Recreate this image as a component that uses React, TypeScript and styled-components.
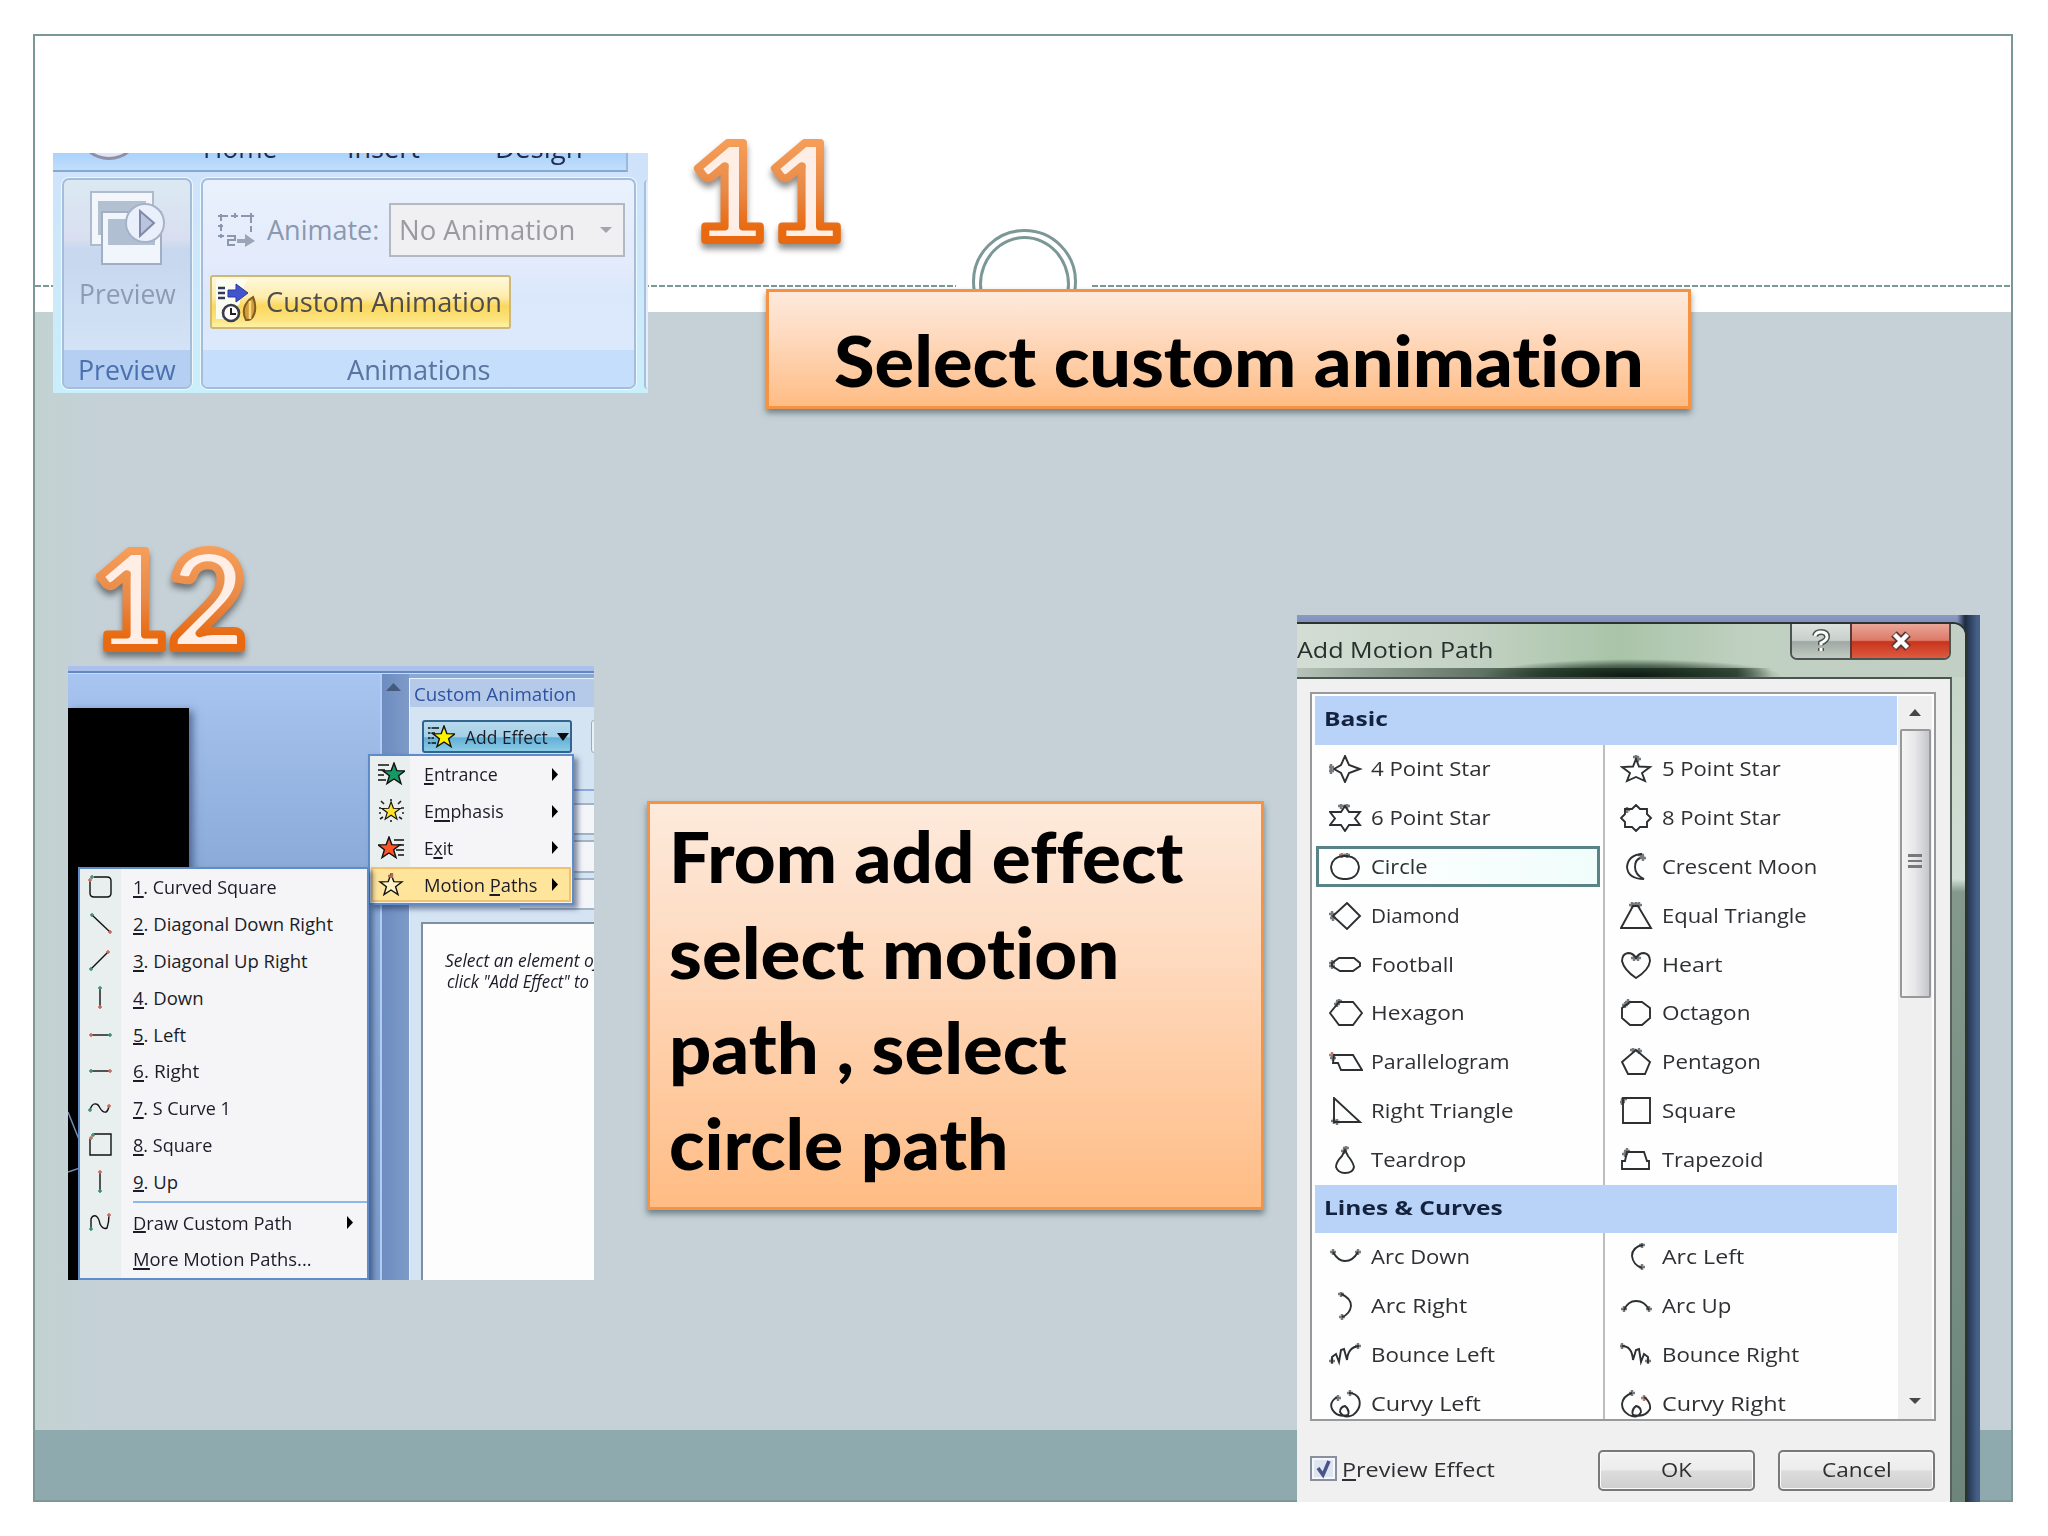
import React, { useLayoutEffect, useRef, useState } from "react";
import styled, { createGlobalStyle, css } from "styled-components";

const Global = createGlobalStyle`
  * { box-sizing: border-box; }
  body { margin: 0; background: #fff; }
  svg { flex: none; }
`;

const ui = `"Open Sans", "Noto Sans", sans-serif`;
const heading = `Lato, "Open Sans", sans-serif`;

/* ---------- text fitted to a given width ---------- */

const FitOuter = styled.span`
  display: inline-block;
  flex: none;
  white-space: nowrap;
`;
const FitInner = styled.span`
  display: inline-block;
  transform-origin: 0 50%;
  white-space: pre;
  u {
    text-decoration: none;
    box-shadow: inset 0 -2px 0 currentColor;
    display: inline-block;
    line-height: 1.12;
  }
`;

function Fit({ w, children }: { w: number; children: React.ReactNode }) {
  const ref = useRef<HTMLSpanElement>(null);
  const [k, setK] = useState(1);
  useLayoutEffect(() => {
    if (ref.current && ref.current.offsetWidth) setK(w / ref.current.offsetWidth);
  }, [w]);
  return (
    <FitOuter style={{ width: w }}>
      <FitInner ref={ref} style={{ transform: `scaleX(${k})` }}>
        {children}
      </FitInner>
    </FitOuter>
  );
}

/* ---------- slide ---------- */

const Page = styled.main`
  position: relative;
  width: 2048px;
  height: 1536px;
  overflow: hidden;
  padding: 34px 35px 34px 33px;
  background: #fff;
  font-family: ${ui};
`;
const Frame = styled.div`
  display: flex;
  flex-direction: column;
  height: 1468px;
  border: 2px solid #7b9796;
`;
const FrameTop = styled.div`
  height: 276px;
  padding-top: 249px;
`;
const FrameBody = styled.div`
  flex: 1;
  background: linear-gradient(90deg, #c2d2d1 0, #c5d1d7 60px);
`;
const FrameFoot = styled.div`
  height: 70px;
  background: #8eaaae;
`;
const DashRow = styled.div`
  display: flex;
  justify-content: space-between;
`;
const Dash = styled.div<{ $w: number }>`
  width: ${(p) => p.$w}px;
  height: 2px;
  background: repeating-linear-gradient(90deg, #7b9796 0 6px, transparent 6px 8px);
`;
const Place = styled.div<{ $x: number; $y: number; $w: number; $h: number }>`
  position: absolute;
  left: ${(p) => p.$x}px;
  top: ${(p) => p.$y}px;
  width: ${(p) => p.$w}px;
  height: ${(p) => p.$h}px;
`;
const Ring = styled(Place)`
  border: 3.5px solid #7b9796;
  border-radius: 50%;
  padding: 4px;
  background: #fff;
  &::before {
    content: "";
    display: block;
    height: 100%;
    border: 3.5px solid #7b9796;
    border-radius: 50%;
  }
`;
const Callout = styled(Place)<{ $pad: string }>`
  border: 3px solid #f59344;
  background: linear-gradient(#fdeadc 0%, #fed9bd 40%, #ffbc84 100%);
  box-shadow: 0 4px 6px rgba(30, 50, 60, 0.5);
  padding: ${(p) => p.$pad};
  font-family: ${heading};
  font-weight: 900;
  font-size: 71px;
  line-height: 95.6px;
  font-variant-ligatures: none;
  color: #000;
`;
const Line = styled.div`
  display: flex;
  height: 95.6px;
`;

function WordArt({ x, y, text, id }: { x: number; y: number; text: string; id: string }) {
  return (
    <Place $x={x} $y={y} $w={170} $h={130}>
      <svg width="170" height="130" style={{ filter: "drop-shadow(0 5px 3px rgba(0,0,0,.45))" }}>
        <defs>
          <linearGradient id={id} x1="0" y1="0" x2="0" y2="118" gradientUnits="userSpaceOnUse">
            <stop offset="0" stopColor="#f9a25c" />
            <stop offset="0.5" stopColor="#e88a48" />
            <stop offset="0.85" stopColor="#e8690f" />
          </linearGradient>
        </defs>
        <text
          x="0 77"
          y="110"
          fontFamily="Lato"
          fontWeight="900"
          fontSize="134"
          fill="#feeee6"
          stroke={`url(#${id})`}
          strokeWidth="8"
          strokeLinejoin="round"
        >
          {text}
        </text>
      </svg>
    </Place>
  );
}

/* ---------- ribbon clipping ---------- */

const Ribbon = styled(Place)`
  overflow: hidden;
  display: flex;
  flex-direction: column;
  background: linear-gradient(#cfe2fb, #c9effa);
  font-size: 27px;
  line-height: 36px;
`;
const TabStrip = styled.div`
  height: 19px;
  width: 575px;
  border-bottom: 2px solid #86a9cf;
  border-right: 2px solid #9db7d8;
  background: linear-gradient(#a9d2fb, #c2defc);
  overflow: hidden;
  display: flex;
  padding-left: 27px;
`;
const Orb = styled.div`
  width: 58px;
  height: 50px;
  margin-top: -43px;
  border-radius: 50%;
  border: 3px solid #8e8fa6;
  background: #dfe3f2;
`;
const TabText = styled.div<{ $gap: number }>`
  margin-left: ${(p) => p.$gap}px;
  margin-top: -23px;
  color: #1e2b4c;
`;
const Groups = styled.div`
  flex: 1;
  display: flex;
  padding: 6px 0 4px 9px;
  gap: 9px;
`;
const Group = styled.section<{ $w: number; $dim?: boolean }>`
  width: ${(p) => p.$w}px;
  flex: none;
  display: flex;
  flex-direction: column;
  border: 2px solid #a6bdd9;
  border-radius: 7px;
  overflow: hidden;
  box-shadow: 0 0 0 1px #eef9ff;
  background: ${(p) =>
    p.$dim
      ? "linear-gradient(#dbe9f2 0%, #d9dff0 28%, #c6d7ee 34%, #d8e6f8 100%)"
      : "linear-gradient(#e9f1fc 0%, #e3ebfc 40%, #dbe8fb 55%, #dde8fb 100%)"};
`;
const GroupFoot = styled.footer<{ $dim?: boolean }>`
  height: 37px;
  display: flex;
  justify-content: center;
  padding-top: 2px;
  background: ${(p) => (p.$dim ? "#b4cff1" : "#c5defc")};
  color: ${(p) => (p.$dim ? "#4a70b0" : "#58749f")};
`;
const PreviewBody = styled.div`
  flex: 1;
  display: flex;
  flex-direction: column;
  align-items: center;
  padding-top: 10px;
  gap: 10px;
  color: #8e9bb0;
`;
const AnimBody = styled.div`
  flex: 1;
  display: flex;
  flex-direction: column;
  align-items: flex-start;
  padding: 23px 0 0 7px;
  gap: 18px;
`;
const AnimRow = styled.div`
  display: flex;
  align-items: center;
  height: 54px;
  padding-left: 7px;
  color: #8b98ad;
`;
const Combo = styled.div`
  margin-left: 10px;
  width: 236px;
  height: 54px;
  border: 2px solid #b3b8c2;
  background: #f0f0f3;
  color: #9a9ba0;
  display: flex;
  align-items: center;
  padding: 0 10px 0 8px;
  justify-content: space-between;
`;
const CustomBtn = styled.div`
  width: 301px;
  height: 54px;
  border: 2px solid #cdb877;
  border-radius: 3px;
  background: linear-gradient(#fff9dc 0%, #fdecab 40%, #fbd75c 58%, #fce37d 85%, #fff2a8 100%);
  display: flex;
  align-items: center;
  padding-left: 4px;
  gap: 8px;
  color: #4d4c4e;
`;
const Gap = styled.span<{ $w: number }>`
  width: ${(p) => p.$w}px;
  flex: none;
`;
const NextGroup = styled.div`
  width: 6px;
  margin: 2px 0 0 -1px;
  border-left: 2px solid #a9bedb;
  border-radius: 6px 0 0 6px;
  background: #e3edfb;
`;

function RibbonShot() {
  return (
    <Ribbon $x={53} $y={153} $w={595} $h={240}>
      <TabStrip>
        <Orb />
        <TabText $gap={65}><Fit w={74}>Home</Fit></TabText>
        <TabText $gap={70}><Fit w={73}>Insert</Fit></TabText>
        <TabText $gap={75}><Fit w={88}>Design</Fit></TabText>
      </TabStrip>
      <Groups>
        <Group $w={130} $dim>
          <PreviewBody>
            <svg width="76" height="76" viewBox="0 0 76 76">
              <rect x="2" y="2" width="62" height="53" fill="#f3f7fb" stroke="#aebbcf" strokeWidth="2" />
              <rect x="9" y="11" width="48" height="34" fill="#b3c0d1" />
              <rect x="13" y="22" width="59" height="52" fill="#f1f6fc" stroke="#a2aec2" strokeWidth="2" />
              <rect x="19" y="29" width="47" height="26" fill="#b1bfd3" />
              <circle cx="56" cy="33" r="19" fill="#eaf0fb" stroke="#a7b2c8" strokeWidth="2" />
              <path d="M51 21 L65 33 L51 46Z" fill="#bcc3dc" stroke="#7f8aa8" strokeWidth="2" />
            </svg>
            <Fit w={97}>Preview</Fit>
          </PreviewBody>
          <GroupFoot $dim><Fit w={98}>Preview</Fit></GroupFoot>
        </Group>
        <Group $w={435}>
          <AnimBody>
            <AnimRow>
              <svg width="40" height="36" viewBox="0 0 40 36" fill="none" stroke="#8a97ad" strokeWidth="2">
                <path d="M4 2V26M4 4H34V20" strokeDasharray="7 3" />
                <path d="M1 4H7M1 24H7M31 4H37M34 1V7M18 1V6M1 14H6" />
                <path d="M10 24H18V28H11V33H18" />
                <path d="M20 27H28V22L38 29L28 35V31H20Z" fill="#9aa5b8" stroke="none" />
              </svg>
              <Gap $w={10} />
              <Fit w={112}>Animate:</Fit>
              <Combo>
                <Fit w={176}>No Animation</Fit>
                <svg width="14" height="8" viewBox="0 0 14 8"><path d="M1 1H13L7 7Z" fill="#a2a5ae" /></svg>
              </Combo>
            </AnimRow>
            <CustomBtn>
              <svg width="42" height="46" viewBox="0 0 42 46">
                <path d="M0 0H32L24 14V24L12 40H0Z" fill="#fbfdf0" />
                <path d="M2 9H9M2 14H9M2 19H9" stroke="#33375e" strokeWidth="2.6" />
                <path d="M12 11H20V5L32 14L20 23V18H12Z" fill="#4255cf" stroke="#2b3899" />
                <circle cx="15" cy="34" r="8" fill="#fff" stroke="#3a3d4a" strokeWidth="2.6" />
                <path d="M15 29V35H20" stroke="#222" strokeWidth="2" fill="none" />
                <path d="M37 18C27 24 26 34 30 41C38 42 42 30 37 18Z" fill="#d69b34" stroke="#7e5a25" strokeWidth="2" />
                <path d="M34 22V40" stroke="#f6da84" strokeWidth="2.5" />
              </svg>
              <Fit w={236}>Custom Animation</Fit>
            </CustomBtn>
          </AnimBody>
          <GroupFoot><Fit w={144}>Animations</Fit></GroupFoot>
        </Group>
        <NextGroup />
      </Groups>
    </Ribbon>
  );
}

/* ---------- menu clipping ---------- */

const Shot = styled(Place)`
  overflow: hidden;
  display: flex;
  flex-direction: column;
  background: #8ba9d8;
  font-size: 18.5px;
  line-height: 24px;
  color: #1b1c28;
`;
const TopStrip = styled.div`
  height: 8px;
  background: #a9c1ec;
  border-bottom: 2px solid #6487bf;
`;
const Workspace = styled.div`
  flex: 1;
  display: flex;
  border-top: 1px solid #c8dcf8;
`;
const Canvas = styled.div`
  width: 314px;
  flex: none;
  padding-top: 34px;
  background: linear-gradient(#a8c4f0 0, #8cabd8 190px, #7c9ccb 100%);
  border-right: 2px solid #b1cdf6;
`;
const BlackSlide = styled.div`
  width: 121px;
  height: 572px;
  background: #000;
  box-shadow: 4px 3px 8px rgba(20, 40, 90, 0.55);
`;
const ScrollCol = styled.div`
  width: 27px;
  flex: none;
  display: flex;
  justify-content: flex-start;
  align-items: flex-start;
  padding: 9px 0 0 4px;
  background: linear-gradient(90deg, #6d8cc0, #7d9ac8);
`;
const Pane = styled.div`
  width: 190px;
  flex: none;
  margin-top: 4px;
  display: flex;
  flex-direction: column;
  background: #d5e4f2;
  border-left: 1px solid #e5f2fc;
  border-top: 1px solid #e5f2fc;
`;
const PaneTitle = styled.div`
  height: 28px;
  padding: 3px 0 0 4px;
  background: #b5cae8;
  color: #2d52a0;
`;
const ButtonsRow = styled.div`
  display: flex;
  gap: 19px;
  padding: 13px 0 0 12px;
`;
const AddBtn = styled.div`
  width: 150px;
  height: 33px;
  flex: none;
  border: 2px solid #31648f;
  border-radius: 3px;
  background: linear-gradient(#b7d9ec 0%, #a4cfe6 50%, #62b0d6 55%, #8ccbe6 100%);
  display: flex;
  align-items: center;
  padding-left: 4px;
`;
const NextBtn = styled.div`
  width: 20px;
  height: 33px;
  border: 1px solid #9aabc0;
  border-radius: 3px;
  background: #e9f0f7;
`;
const Fields = styled.div`
  margin-top: 36px;
  height: 121px;
  border-top: 2px solid #8aaade;
  padding: 12px 0 0 0;
  display: flex;
  flex-direction: column;
  gap: 5px;
`;
const Field = styled.div`
  height: 33px;
  margin-left: 110px;
  border: 2px solid #a3b3c6;
  border-width: 2px 0;
  background: #f3f5f9;
`;
const EffectList = styled.div`
  flex: 1;
  margin: 12px 0 0 11px;
  padding: 26px 0 0 22px;
  border: 2px solid #7d8ea5;
  border-width: 2px 0 0 2px;
  background: #fdfdfe;
  font-size: 17.5px;
  line-height: 20.5px;
  font-style: italic;
  div + div { padding-left: 2px; }
`;
const Menu = styled(Place)<{ $col: number }>`
  border: 2px solid #5f8cc9;
  background: linear-gradient(90deg, #e9eeee ${(p) => p.$col}px, #f5f5f7 ${(p) => p.$col}px);
  display: flex;
  flex-direction: column;
  box-shadow: 4px 4px 5px rgba(20, 40, 80, 0.5);
`;
const Item = styled.div<{ $hot?: boolean }>`
  height: 36.8px;
  display: flex;
  align-items: center;
  padding-left: 8px;
  padding-right: 14px;
  ${(p) =>
    p.$hot &&
    css`
      margin: 1px 1px 0 1px;
      height: 35px;
      padding-left: 5px;
      padding-right: 11px;
      border: 2px solid #f3c36c;
      background: #ffe59c;
    `}
`;
const Spacer = styled.span`
  flex: 1;
`;
const Rule = styled.div`
  height: 2px;
  margin: 1px 0 1px 53px;
  background: #8db8ee;
`;
const Arrow = () => (
  <svg width="6" height="13" viewBox="0 0 6 13"><path d="M0 0L6 6.500L0 13Z" fill="#000" /></svg>
);
const starD = "M12 1L14.8 8.6L23 8.9L16.6 13.8L19 21.6L12 17L5 21.6L7.4 13.8L1 8.9L9.2 8.6Z";

function StarIcon({ kind }: { kind: "add" | "in" | "em" | "out" | "path" }) {
  const fill = { add: "#fff200", in: "#159a66", em: "#ffe22e", out: "#fb5426", path: "#fff3c4" }[kind];
  const shift = kind === "add" || kind === "in" ? 4 : kind === "out" ? -1 : 1;
  return (
    <svg width="27" height="24" viewBox="0 0 27 24">
      {(kind === "add" || kind === "in") && (
        <path d="M0 3H11M0 8H7M0 13H6M0 18H8" stroke="#111" strokeWidth="1.6" strokeDasharray={kind === "in" ? undefined : "2.5 1 9 0"} />
      )}
      {kind === "out" && <path d="M16 4H26M20 9H26M18 14H26M20 19H26" stroke="#111" strokeWidth="1.6" />}
      {kind === "em" && (
        <path d="M3 2L6 5M23 2L20 5M1 9H3M23 9H26M2 20L5 18M24 20L21 18M13 0V2M1 14H3M24 14H26M13 21V23" stroke="#222" strokeWidth="1.6" />
      )}
      <path d={starD} transform={`translate(${shift} 0)${kind === "em" ? " translate(2 2) scale(.84)" : ""}`} fill={fill} stroke="#111" strokeWidth="1.4" />
      {kind === "path" && <path d="M10 3H14M14 0V5" stroke="#b06a50" strokeWidth="2.4" />}
    </svg>
  );
}

const G = "#3d8f78";
const R = "#c96a5a";
type Mark = [number, number, string];
const menuPaths: Record<string, { d: string; m: Mark[] }> = {
  csq: { d: "M6 3H19Q23 3 23 7V19Q23 23 19 23H6Q2 23 2 19V7", m: [[4, 3, G], [2, 6, R]] },
  ddr: { d: "M4 4L22 21", m: [[4, 4, G], [22, 21, R]] },
  dur: { d: "M3 21L20 4", m: [[3, 21, G], [20, 4, R]] },
  down: { d: "M12 3V23", m: [[12, 3, G], [12, 22, R]] },
  left: { d: "M3 13H22", m: [[3, 13, R], [22, 13, G]] },
  right: { d: "M3 13H22", m: [[3, 13, G], [22, 13, R]] },
  scv: { d: "M2 15Q4 8 8 9Q10 9 12 13Q15 18 18 17Q20 16 21 11", m: [[2, 15, G], [21, 11, R]] },
  sq: { d: "M6 2H23V23H2V7", m: [[5, 3, G], [3, 6, R]] },
  up: { d: "M12 3V23", m: [[12, 3, R], [12, 22, G]] },
  draw: { d: "M3 19V9Q4 5 8 6Q11 8 12 14Q15 20 19 18Q21 12 21 5", m: [[3, 19, G], [21, 5, R]] },
};
function MenuIcon({ n }: { n: string }) {
  const p = menuPaths[n];
  return (
    <svg width="25" height="26" viewBox="0 0 25 26">
      {p && <path d={p.d} fill="none" stroke="#111" strokeWidth="1.4" />}
      {p && p.m.map(([x, y, c], i) => <path key={i} d={`M${x - 2} ${y}H${x + 2}M${x} ${y - 2}V${y + 2}`} stroke={c} strokeWidth="1.5" />)}
    </svg>
  );
}

const pathItems: [string, string, string, number][] = [
  ["csq", "1", ". Curved Square", 144],
  ["ddr", "2", ". Diagonal Down Right", 200],
  ["dur", "3", ". Diagonal Up Right", 175],
  ["down", "4", ". Down", 70],
  ["left", "5", ". Left", 53],
  ["right", "6", ". Right", 66],
  ["scv", "7", ". S Curve 1", 98],
  ["sq", "8", ". Square", 79],
  ["up", "9", ". Up", 45],
];

function MenuShot() {
  return (
    <Shot $x={68} $y={666} $w={526} $h={614}>
      <TopStrip />
      <Workspace>
        <Canvas>
          <BlackSlide>
            <svg width="12" height="572">
              <path d="M0 404L12 434M0 464L12 460" stroke="#6f8fb4" strokeWidth="1.5" fill="none" />
            </svg>
          </BlackSlide>
        </Canvas>
        <ScrollCol>
          <svg width="15" height="8" viewBox="0 0 15 8"><path d="M0 8L7.500 0L15 8Z" fill="#465a7e" /></svg>
        </ScrollCol>
        <Pane>
          <PaneTitle><Fit w={162}>Custom Animation</Fit></PaneTitle>
          <ButtonsRow>
            <AddBtn>
              <StarIcon kind="add" />
              <Gap $w={10} />
              <Fit w={83}>Add Effect</Fit>
              <Gap $w={9} />
              <svg width="12" height="8" viewBox="0 0 12 8"><path d="M0 0H12L6 8Z" fill="#0b0b14" /></svg>
            </AddBtn>
            <NextBtn />
          </ButtonsRow>
          <Fields>
            <Field />
            <Field />
            <Field />
          </Fields>
          <EffectList>
            <div><Fit w={223}>Select an element of the slide</Fit></div>
            <div><Fit w={203}>click "Add Effect" to add ani</Fit></div>
          </EffectList>
        </Pane>
      </Workspace>
      <Menu $x={300} $y={88} $w={206} $h={151} $col={40}>
        <Item><StarIcon kind="in" /><Gap $w={19} /><Fit w={74}><u>E</u>ntrance</Fit><Spacer /><Arrow /></Item>
        <Item><StarIcon kind="em" /><Gap $w={19} /><Fit w={80}>E<u>m</u>phasis</Fit><Spacer /><Arrow /></Item>
        <Item><StarIcon kind="out" /><Gap $w={19} /><Fit w={29}>E<u>x</u>it</Fit><Spacer /><Arrow /></Item>
        <Item $hot><StarIcon kind="path" /><Gap $w={19} /><Fit w={114}>Motion <u>P</u>aths</Fit><Spacer /><Arrow /></Item>
      </Menu>
      <Menu $x={10} $y={201} $w={291} $h={413} $col={41}>
        {pathItems.map(([n, k, t, w]) => (
          <Item key={n}><MenuIcon n={n} /><Gap $w={20} /><Fit w={w}><u>{k}</u>{t}</Fit></Item>
        ))}
        <Rule />
        <Item><MenuIcon n="draw" /><Gap $w={20} /><Fit w={159}><u>D</u>raw Custom Path</Fit><Spacer /><Arrow /></Item>
        <Item><MenuIcon n="" /><Gap $w={20} /><Fit w={179}><u>M</u>ore Motion Paths...</Fit></Item>
      </Menu>
    </Shot>
  );
}

/* ---------- dialog clipping ---------- */

const DialogShot = styled(Place)`
  overflow: hidden;
  padding-top: 7px;
  padding-right: 13px;
  background: linear-gradient(90deg, transparent 660px, #1c2c40 668px, #465f88 680px), linear-gradient(#8c9ac4, #7c8bb2 12px);
  color: #2e3033;
  font-size: 20px;
  line-height: 28px;
`;
const Window = styled.div`
  height: 880px;
  border: 2px solid #2b3431;
  border-left: 0;
  border-bottom: 0;
  border-radius: 0 14px 0 0;
  overflow: hidden;
  display: flex;
  flex-direction: column;
  background: linear-gradient(#c4d3c6 0, #d2dfd6 255px, #84998c 268px, #6d857a 100%);
`;
const TitleBar = styled.div`
  height: 53px;
  display: flex;
  justify-content: space-between;
  padding-right: 14px;
  font-size: 21.5px;
  color: #26302c;
  background:
    radial-gradient(ellipse 150px 17px at 335px 52px, rgba(10, 22, 14, 0.95), rgba(20, 40, 26, 0.6) 60%, transparent),
    linear-gradient(90deg, rgba(70, 90, 75, 0.2), rgba(40, 60, 45, 0.8) 250px 440px, transparent 475px) 0 100% / 475px 9px no-repeat,
    linear-gradient(90deg, #d3ddd4 0, #c4d2c4 170px, #a9c4a8 320px, #bfd0c0 450px, #c2cfc6 100%);
`;
const TitleText = styled.div`
  padding-top: 12px;
`;
const Caption = styled.div`
  display: flex;
  width: 161px;
  height: 36px;
  border: 2px solid #4c5552;
  border-top: 0;
  border-radius: 0 0 7px 7px;
  overflow: hidden;
`;
const CapBtn = styled.div<{ $close?: boolean }>`
  flex: ${(p) => (p.$close ? "1" : "0 0 58px")};
  display: flex;
  align-items: center;
  justify-content: center;
  border-left: ${(p) => (p.$close ? "2px solid #5a3a36" : "0")};
  background: ${(p) =>
    p.$close
      ? "linear-gradient(#eaa698 0%, #dc7a68 48%, #c8341c 52%, #dd5a40 100%)"
      : "linear-gradient(#dbe1dc 0%, #c9d0cb 48%, #9fa8a2 52%, #c2cac4 100%)"};
`;
const Client = styled.div`
  flex: 1;
  width: 655px;
  border-top: 2px solid #4a5350;
  border-right: 2px solid #57625e;
  background: #f0f0f0;
  padding: 13px 14px 0 13px;
  display: flex;
  flex-direction: column;
`;
const ListBox = styled.div`
  height: 729px;
  flex: none;
  border: 2px solid #98999b;
  background: #fefefe;
  display: flex;
  justify-content: space-between;
  padding: 2px 2px 0 3px;
`;
const ListBody = styled.div`
  width: 582px;
  display: flex;
  flex-direction: column;
  overflow: hidden;
`;
const SectionHead = styled.div`
  height: 48.5px;
  flex: none;
  background: #b9d3f8;
  padding: 9px 0 0 9px;
  font-weight: 700;
  color: #13233f;
`;
const Grid = styled.div`
  flex: none;
  display: grid;
  grid-template-columns: 290px 292px;
  grid-auto-rows: 48.9px;
  background: linear-gradient(90deg, transparent 288px, #bcbec0 288px, #bcbec0 290px, transparent 290px);
`;
const Cell = styled.div<{ $sel?: boolean; $right?: boolean }>`
  display: flex;
  align-items: center;
  gap: 8px;
  padding-left: ${(p) => (p.$right ? 15 : 14)}px;
  ${(p) =>
    p.$sel &&
    css`
      margin: 4px 5px 4px 1px;
      padding-left: 10px;
      border: 3px solid #588488;
      background: linear-gradient(90deg, #fff, #f0fdfb);
    `}
`;
const ScrollBar = styled.div`
  width: 34px;
  display: flex;
  flex-direction: column;
  align-items: center;
  background: #f0eff0;
`;
const Thumb = styled.div`
  width: 31px;
  height: 269px;
  flex: none;
  border: 2px solid #97989b;
  border-radius: 2px;
  background: linear-gradient(90deg, #f5f5f5, #e6e6e8 50%, #c5c6ca);
  display: flex;
  flex-direction: column;
  align-items: center;
  padding-top: 123px;
  gap: 3px;
`;
const Grip = styled.div`
  width: 14px;
  height: 2.5px;
  background: #77787c;
`;
const Actions = styled.div`
  display: flex;
  align-items: center;
  height: 42px;
  margin-top: 28px;
`;
const CheckBox = styled.div`
  width: 27px;
  height: 25px;
  border: 2px solid #8a8fa0;
  background: #dfe4f2;
  box-shadow: inset 0 0 0 2px #f5f7fb;
  display: flex;
  align-items: center;
  justify-content: center;
  margin-top: -3px;
`;
const Push = styled.div`
  width: 157px;
  height: 41px;
  border: 2px solid #77797c;
  border-radius: 5px;
  background: linear-gradient(#f3f3f3 0%, #ececec 48%, #dcdcdc 52%, #cfcfcf 100%);
  box-shadow: inset 0 0 0 1px #fafafa;
  display: flex;
  align-items: center;
  justify-content: center;
`;

const K = "#777b7e";
const shapes: Record<string, { d: string; m?: Mark[] }> = {
  "4 Point Star": { d: "M16 1L20 10L31 14L20 18L16 27L12 18L5 14L12 10Z", m: [[2, 12, K], [2, 16, K]] },
  "5 Point Star": { d: "M16 4L19 11.500L30 12L22 18L25 26L16 22L7 26L10 18L2 12L13 11.500Z", m: [[16, 2, K], [18, 4, K]] },
  "6 Point Star": { d: "M16 2L20 8H31L26 14.500L31 21H20L16 27L12 21H1L6 14.500L1 8H12Z", m: [[12, 2, K], [18, 2, K]] },
  "8 Point Star": { d: "M16 1L20 5H27V10L31 14L27 18V23H20L16 27L12 23H5V18L1 14L5 10V5H12Z", m: [[7, 6, K]] },
  Circle: { d: "M16 3H18Q29 4 30 14Q29 25 18 26H14Q3 25 2 14Q3 4 14 3Z", m: [[13, 2, "#b08078"], [18, 2, K]] },
  "Crescent Moon": { d: "M22 1Q8 2 7 14Q8 26 24 26Q15 22 15 14Q15 7 20 5", m: [[21, 2, K], [23, 5, K]] },
  Diamond: { d: "M18 1L31 14L18 27L4 14Z", m: [[3, 12, K], [4, 16, K]] },
  "Equal Triangle": { d: "M13 4H18L31 26H1Z", m: [[12, 3, K], [16, 2, K], [19, 3, K]] },
  Football: { d: "M10 7H25L31 12V15L24 20H11L3 15V12Z", m: [[3, 12, K], [3, 15, K]] },
  Heart: { d: "M16 7Q13 2 8 2Q2 3 2 10Q4 19 16 27Q29 19 30 10Q30 3 24 2Q19 2 16 7Z", m: [[14, 7, K], [18, 7, K]] },
  Hexagon: { d: "M10 3H24L33 14L24 26H10L1 14Z", m: [[10, 2, K], [8, 5, K]] },
  Octagon: { d: "M10 3H22L30 9V19L22 26H10L2 19V9Z", m: [[8, 3, K], [5, 6, K]] },
  Parallelogram: { d: "M5 7H24L33 22H12L9 15H4Z", m: [[3, 7, "#b08078"], [4, 10, K]] },
  Pentagon: { d: "M16 2L30 14L25 26H8L2 14Z", m: [[13, 2, K], [19, 3, K]] },
  "Right Triangle": { d: "M5 1V25H31Z", m: [[5, 24, K], [8, 25, K]] },
  Square: { d: "M3 1H30V26H3Z", m: [[4, 2, K], [2, 5, K]] },
  Teardrop: { d: "M16 4L13 10Q7 16 7 21Q9 27 16 27Q24 27 25 21Q24 16 19 10Z", m: [[17, 2, K], [15, 5, K]] },
  Trapezoid: { d: "M7 6H24L27 15H29V23H2V15H5Z", m: [[7, 5, K], [5, 8, K]] },
  "Arc Down": { d: "M4 9Q9 18 16 18Q24 18 29 9", m: [[4, 9, K], [29, 9, K]] },
  "Arc Left": { d: "M23 2Q12 4 12 13Q13 22 22 25", m: [[22, 2, K], [22, 24, K]] },
  "Arc Right": { d: "M12 2Q22 6 22 14Q21 22 13 25", m: [[12, 2, K], [13, 25, K]] },
  "Arc Up": { d: "M4 18Q8 9 16 9Q25 9 29 18", m: [[4, 17, K], [29, 17, K]] },
  "Bounce Left": { d: "M3 22V16L7 13L10 21L12 9L15 8L18 19Q19 6 30 5", m: [[3, 20, K], [29, 5, K]] },
  "Bounce Right": { d: "M2 5Q12 5 13 19L16 9L19 8L21 21L24 13L28 16V22", m: [[2, 5, K], [28, 20, K]] },
  "Curvy Left": { d: "M8 7Q0 12 3 19Q8 28 19 25Q21 20 16 16Q11 17 11 22Q15 29 24 25Q33 18 30 9Q27 3 20 3", m: [[9, 8, K], [21, 3, K]] },
  "Curvy Right": { d: "M12 3Q3 6 2 14Q2 21 9 25Q18 29 21 22Q21 17 16 16Q11 20 13 25Q25 28 30 19Q31 12 24 7", m: [[12, 3, K], [24, 8, "#b08078"]] },
};
function ShapeIcon({ n }: { n: string }) {
  const s = shapes[n];
  return (
    <svg width="34" height="28" viewBox="0 0 34 28">
      {s.m?.map(([x, y, c], i) => <path key={i} d={`M${x - 3} ${y}H${x + 3}M${x} ${y - 3}V${y + 3}`} stroke={c} strokeWidth="2.4" />)}
      <path d={s.d} fill="none" stroke="#2c3033" strokeWidth="1.9" />
    </svg>
  );
}

const basic: [string, number][] = [
  ["4 Point Star", 120], ["5 Point Star", 119],
  ["6 Point Star", 120], ["8 Point Star", 119],
  ["Circle", 57], ["Crescent Moon", 155],
  ["Diamond", 89], ["Equal Triangle", 145],
  ["Football", 83], ["Heart", 60],
  ["Hexagon", 94], ["Octagon", 89],
  ["Parallelogram", 139], ["Pentagon", 99],
  ["Right Triangle", 143], ["Square", 74],
  ["Teardrop", 95], ["Trapezoid", 101],
];
const lines: [string, number][] = [
  ["Arc Down", 99], ["Arc Left", 82],
  ["Arc Right", 96], ["Arc Up", 69],
  ["Bounce Left", 124], ["Bounce Right", 137],
  ["Curvy Left", 110], ["Curvy Right", 124],
];

function ShapeGrid({ items }: { items: [string, number][] }) {
  return (
    <Grid>
      {items.map(([n, w], i) => (
        <Cell key={n} $right={i % 2 === 1} $sel={n === "Circle"}><ShapeIcon n={n} /><Fit w={w}>{n}</Fit></Cell>
      ))}
    </Grid>
  );
}

function Dialog() {
  return (
    <DialogShot $x={1297} $y={615} $w={683} $h={887}>
      <Window>
        <TitleBar>
          <TitleText><Fit w={196}>Add Motion Path</Fit></TitleText>
          <Caption>
            <CapBtn>
              <svg width="20" height="24" viewBox="0 0 20 24" fill="none">
                <path d="M4 7Q5 3 10 3Q16 3 16 8Q16 11 10 14V16M10 19V22" stroke="#4c5452" strokeWidth="6" />
                <path d="M4 7Q5 3 10 3Q16 3 16 8Q16 11 10 14V16M10 19V22" stroke="#fff" strokeWidth="3" />
              </svg>
            </CapBtn>
            <CapBtn $close>
              <svg width="24" height="20" viewBox="0 0 24 20" fill="none">
                <path d="M5 3L19 17M19 3L5 17" stroke="#5e3733" strokeWidth="8" />
                <path d="M5.500 3.500L18.500 16.500M18.500 3.500L5.500 16.500" stroke="#fff" strokeWidth="4.500" />
              </svg>
            </CapBtn>
          </Caption>
        </TitleBar>
        <Client>
          <ListBox>
            <ListBody>
              <SectionHead><Fit w={64}>Basic</Fit></SectionHead>
              <ShapeGrid items={basic} />
              <SectionHead><Fit w={179}>Lines & Curves</Fit></SectionHead>
              <ShapeGrid items={lines} />
            </ListBody>
            <ScrollBar>
              <svg width="14" height="33" viewBox="0 0 14 33"><path d="M1 20L7 13L13 20Z" fill="#45474b" /></svg>
              <Thumb>
                <Grip />
                <Grip />
                <Grip />
              </Thumb>
              <Spacer />
              <svg width="14" height="28" viewBox="0 0 14 28"><path d="M1 7H13L7 13Z" fill="#45474b" /></svg>
            </ScrollBar>
          </ListBox>
          <Actions>
            <CheckBox>
              <svg width="18" height="20" viewBox="0 0 18 20"><path d="M3 9L8 16L14 2" fill="none" stroke="#4a5488" strokeWidth="3.5" /></svg>
            </CheckBox>
            <Gap $w={5} />
            <Fit w={153}><u>P</u>review Effect</Fit>
            <Gap $w={103} />
            <Push><Fit w={31}>OK</Fit></Push>
            <Gap $w={23} />
            <Push><Fit w={70}>Cancel</Fit></Push>
          </Actions>
        </Client>
      </Window>
    </DialogShot>
  );
}

export default function App() {
  return (
    <Page>
      <Global />
      <Frame>
        <FrameTop>
          <DashRow>
            <Dash $w={921} />
            <Dash $w={919} />
          </DashRow>
        </FrameTop>
        <FrameBody />
        <FrameFoot />
      </Frame>
      <Ring $x={972} $y={229} $w={105} $h={105} />
      <WordArt x={690} y={130} text="11" id="wa11" />
      <Callout $x={766} $y={289} $w={925} $h={120} $pad="20px 0 0 65px">
        <Line><Fit w={810}>Select custom animation</Fit></Line>
      </Callout>
      <WordArt x={92} y={538} text="12" id="wa12" />
      <Callout $x={647} $y={801} $w={617} $h={409} $pad="4px 0 0 19px">
        <Line><Fit w={515}>From add effect</Fit></Line>
        <Line><Fit w={450}>select motion</Fit></Line>
        <Line><Fit w={398}>path , select</Fit></Line>
        <Line><Fit w={339}>circle path</Fit></Line>
      </Callout>
      <RibbonShot />
      <MenuShot />
      <Dialog />
    </Page>
  );
}
